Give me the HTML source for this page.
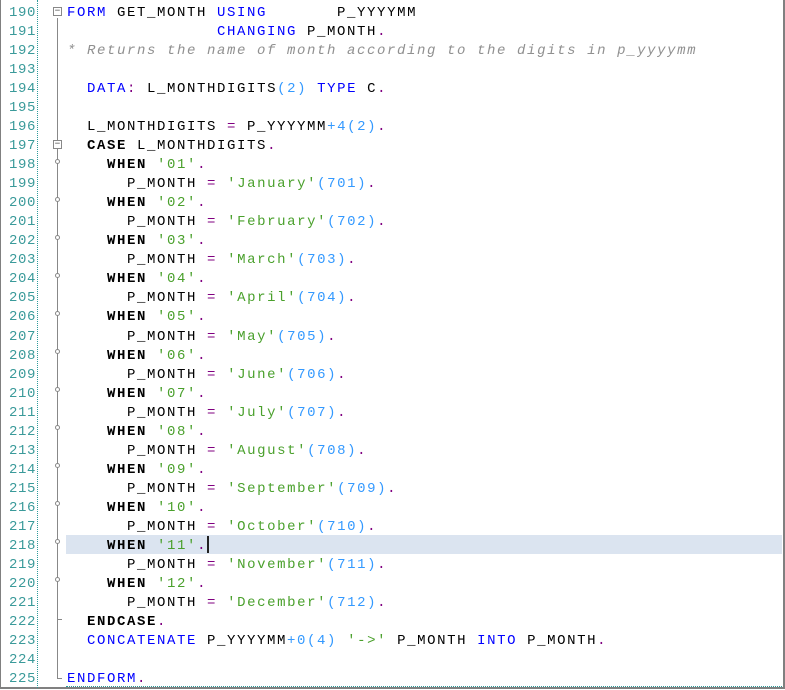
<!DOCTYPE html>
<html><head><meta charset="utf-8"><style>
html,body{margin:0;padding:0;background:#fff;}
body{width:785px;height:690px;position:relative;overflow:hidden;}
.frame{position:absolute;left:0;top:0;width:782px;height:687px;border-left:1px solid #808080;border-right:2px solid #808080;border-bottom:2px solid #808080;}
.sep{position:absolute;left:37px;top:0;height:688px;border-left:1px dotted #2e9a9a;}
.bot{position:absolute;left:66px;top:686px;width:716px;border-top:1px dotted #2e9a9a;}
.hl{position:absolute;left:66px;top:535px;width:716px;height:19px;background:#dbe4f0;}
.ln{position:absolute;left:4px;width:32px;text-align:right;font:14px "Liberation Mono",monospace;letter-spacing:0.6px;color:#3a9a9a;}
.code{position:absolute;left:67px;white-space:pre;font:14px "Liberation Mono",monospace;letter-spacing:1.6px;color:#000;}
.k{color:#0000ff}.b{font-weight:bold}.s{color:#4aa02c}.n{color:#3399ff}.p{color:#800080}.c{color:#909090;font-style:italic}
.fold{position:absolute;left:57px;border-left:1px solid #888;}
.box{position:absolute;left:53px;width:7px;height:7px;border:1px solid #888;background:#fff;font:9px monospace;line-height:7px;text-align:center;color:#555}
.dot{position:absolute;left:55px;width:3px;height:3px;border:1px solid #888;border-radius:50%;background:#fff}
.cur{position:absolute;left:207px;top:536px;width:2px;height:17px;background:#222}
</style></head><body>
<div class="frame"></div>
<div class="hl"></div>
<div class="sep"></div>
<div class="bot"></div>
<div class="fold" style="top:18px;height:660px"></div>
<div class="fold" style="top:678px;width:4px;border-bottom:1px solid #888;height:0"></div>
<div class="fold" style="top:619px;width:4px;border-bottom:1px solid #888;height:0"></div>
<div class="box" style="top:7px">−</div>
<div class="box" style="top:140px">−</div>
<div class="dot" style="top:159px"></div><div class="dot" style="top:197px"></div><div class="dot" style="top:235px"></div><div class="dot" style="top:273px"></div><div class="dot" style="top:311px"></div><div class="dot" style="top:349px"></div><div class="dot" style="top:387px"></div><div class="dot" style="top:425px"></div><div class="dot" style="top:463px"></div><div class="dot" style="top:501px"></div><div class="dot" style="top:539px"></div><div class="dot" style="top:577px"></div>
<div class="cur"></div>
<div id="L"></div>
<script>
var lines=[
'<span class="k">FORM</span> GET_MONTH <span class="k">USING</span>       P_YYYYMM',
'               <span class="k">CHANGING</span> P_MONTH<span class="p">.</span>',
'<span class="c">* Returns the name of month according to the digits in p_yyyymm</span>',
'',
'  <span class="k">DATA</span><span class="p">:</span> L_MONTHDIGITS<span class="n">(2)</span> <span class="k">TYPE</span> C<span class="p">.</span>',
'',
'  L_MONTHDIGITS <span class="p">=</span> P_YYYYMM<span class="n">+4(2)</span><span class="p">.</span>',
'  <span class="b">CASE</span> L_MONTHDIGITS<span class="p">.</span>'];
var m=['January','February','March','April','May','June','July','August','September','October','November','December'];
for(var i=0;i<12;i++){var d=(i<9?'0':'')+(i+1);
lines.push('    <span class="b">WHEN</span> <span class="s">\''+d+'\'</span><span class="p">.</span>');
lines.push('      P_MONTH <span class="p">=</span> <span class="s">\''+m[i]+'\'</span><span class="n">('+(701+i)+')</span><span class="p">.</span>');}
lines.push('  <span class="b">ENDCASE</span><span class="p">.</span>');
lines.push('  <span class="k">CONCATENATE</span> P_YYYYMM<span class="n">+0(4)</span> <span class="s">\'->\'</span> P_MONTH <span class="k">INTO</span> P_MONTH<span class="p">.</span>');
lines.push('');
lines.push('<span class="k">ENDFORM</span><span class="p">.</span>');
var h='';
for(var j=0;j<lines.length;j++){var t=5+j*19.03;
h+='<div class="ln" style="top:'+t+'px">'+(190+j)+'</div><div class="code" style="top:'+t+'px">'+lines[j]+'</div>';}
document.getElementById('L').innerHTML=h;
</script>
</body></html>
